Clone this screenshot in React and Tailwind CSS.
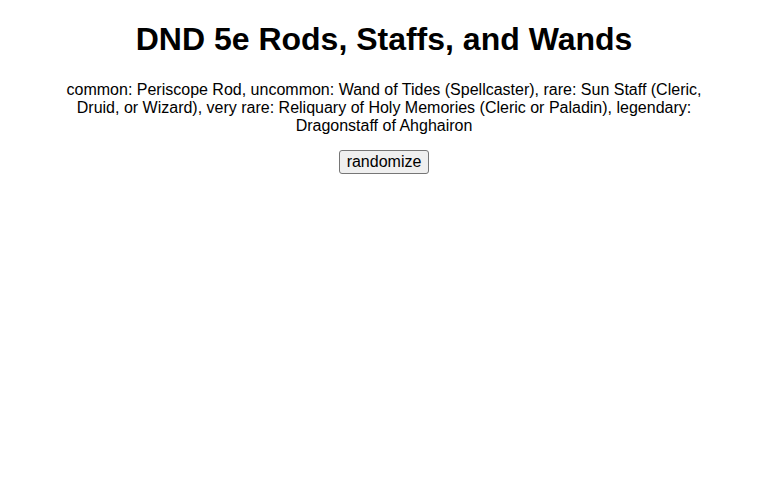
export default function App() {
  return (
    <div className="min-h-[480px] bg-white text-black text-center px-[59px]" style={{ fontFamily: '"Liberation Sans", Arial, sans-serif' }}>
      <h1 className="text-[32px] leading-[37px] font-bold pt-[21px] pb-[23px]">DND 5e Rods, Staffs, and Wands</h1>
      <p className="text-[16px] leading-[18px] mb-[15px]">
        common: Periscope Rod, uncommon: Wand of Tides (Spellcaster), rare: Sun Staff (Cleric, Druid, or Wizard), very rare: Reliquary of Holy Memories (Cleric or Paladin), legendary: Dragonstaff of Ahghairon
      </p>
      <button className="text-[16px] leading-[18px] px-[7px] pt-[2px] pb-[2px] h-[24px] bg-[#efefef] border border-[#767676] rounded-[3px]">randomize</button>
    </div>
  );
}
